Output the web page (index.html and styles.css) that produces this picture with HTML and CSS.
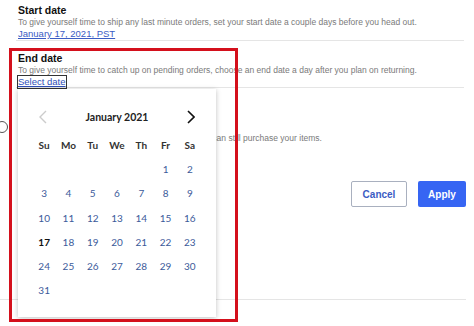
FILE: index.html
```html
<!DOCTYPE html>
<html lang="en">
<head>
    <meta charset="UTF-8">
    <title>Time away</title>
    <link rel="stylesheet" href="styles.css">
</head>
<body>
    <div class="page">
        <section class="field">
            <h2>Start date</h2>
            <p class="hint">To give yourself time to ship any last minute orders, set your start date a couple days before you head out.</p>
            <a href="#" class="date-link">January 17, 2021, PST</a>
        </section>

        <section class="field">
            <h2>End date</h2>
            <p class="hint">To give yourself time to catch up on pending orders, choose an end date a day after you plan on returning.</p>
            <a href="#" class="date-link focused">Select date</a>
        </section>

        <section class="options">
            <div class="radio-row">
                <span class="radio"></span>
            </div>
            <p class="hint">While you're away, your listings stay live so buyers can still purchase your items.</p>
        </section>

        <div class="actions">
            <button class="btn secondary">Cancel</button>
            <button class="btn primary">Apply</button>
        </div>

        <hr class="bottom-rule">

        <!-- calendar popup for the end date -->
        <div class="calendar">
            <div class="cal-head">
                <svg class="chev disabled" viewBox="0 0 8 14" width="8" height="14"><path d="M7 1L1 7l6 6" fill="none" stroke="currentColor" stroke-width="1.4"/></svg>
                <span class="month">January 2021</span>
                <svg class="chev" viewBox="0 0 8 14" width="8" height="14"><path d="M1 1l6 6-6 6" fill="none" stroke="currentColor" stroke-width="1.6"/></svg>
            </div>
            <div class="grid">
                <span class="wd">Su</span><span class="wd">Mo</span><span class="wd">Tu</span><span class="wd">We</span><span class="wd">Th</span><span class="wd">Fr</span><span class="wd">Sa</span>
                <span></span><span></span><span></span><span></span><span></span>
                <span class="day">1</span><span class="day">2</span>
                <span class="day">3</span><span class="day">4</span><span class="day">5</span><span class="day">6</span><span class="day">7</span><span class="day">8</span><span class="day">9</span>
                <span class="day">10</span><span class="day">11</span><span class="day">12</span><span class="day">13</span><span class="day">14</span><span class="day">15</span><span class="day">16</span>
                <span class="day today">17</span><span class="day">18</span><span class="day">19</span><span class="day">20</span><span class="day">21</span><span class="day">22</span><span class="day">23</span>
                <span class="day">24</span><span class="day">25</span><span class="day">26</span><span class="day">27</span><span class="day">28</span><span class="day">29</span><span class="day">30</span>
                <span class="day">31</span>
            </div>
        </div>

        <!-- red highlight around the end date -->
        <div class="highlight"></div>
    </div>
</body>
</html>
```

FILE: styles.css
```css
body {
    margin: 0;
    background: #fff;
    font-family: "Liberation Sans", Arial, sans-serif;
    color: #111;
    overflow: hidden;
}
.page {
    position: relative;
    height: 326px;
}
.field {
    margin: 0 10px 0 16px;
    padding: 4px 0 0 2px;
    height: 36px;
    border-bottom: 1px solid #e5e5e5;
}
.field + .field {
    padding-top: 11px;
    height: 35px;
}
h2 {
    font-size: 10.5px;
    font-weight: bold;
    margin: 0;
    line-height: 13px;
}
.hint {
    font-size: 8.5px;
    color: #7a7a7a;
    margin: 0;
    line-height: 11px;
}
.date-link {
    display: block;
    width: fit-content;
    font-size: 9.5px;
    line-height: 12px;
    color: #3b5cc4;
}
.focused {
    color: #2f4fb8;
    outline: 1px solid #333;
}
.options {
    padding-top: 33px;
    height: 60px;
}
.radio-row {
    height: 12px;
}
.radio {
    display: block;
    width: 10px;
    height: 10px;
    margin-left: -4px;
    border: 1px solid #555;
    border-radius: 50%;
}
.options .hint {
    margin-left: 20px;
}
.actions {
    display: flex;
    justify-content: flex-end;
    gap: 11px;
    padding-right: 8px;
}
.btn {
    height: 26px;
    font-family: "Liberation Sans", Arial, sans-serif;
    font-size: 10px;
    font-weight: bold;
    border-radius: 2px;
}
.secondary {
    width: 56px;
    background: #fff;
    color: #3b5cc4;
    border: 1px solid #a9b0bf;
}
.primary {
    width: 48px;
    background: #3665f3;
    color: #fff;
    border: none;
}
.bottom-rule {
    margin: 92px 8px 0 0;
    border: none;
    border-top: 1px solid #e5e5e5;
}
.calendar {
    position: absolute;
    left: 18px;
    top: 89px;
    width: 198px;
    height: 228px;
    background: #fff;
    box-shadow: 0 1px 5px rgba(0, 0, 0, 0.25);
    font-family: Lato, "Open Sans", sans-serif;
}
.cal-head {
    display: flex;
    align-items: center;
    justify-content: space-between;
    padding: 21px 21px 0 21px;
    height: 14px;
}
.chev {
    color: #111;
}
.chev.disabled {
    color: #ccc;
}
.month {
    font-size: 10.5px;
    font-weight: bold;
    color: #222;
}
.grid {
    display: grid;
    grid-template-columns: repeat(7, 1fr);
    grid-auto-rows: 24.2px;
    padding: 9px 14px 0 14px;
    align-items: center;
    justify-items: center;
}
.wd {
    font-size: 10px;
    font-weight: bold;
    color: #333;
}
.day {
    font-size: 10px;
    color: #3b5a9a;
}
.today {
    color: #111;
    font-weight: bold;
}
.highlight {
    position: absolute;
    left: 9px;
    top: 48px;
    width: 223px;
    height: 268px;
    border: 3px solid #d4101c;
    pointer-events: none;
}
```
